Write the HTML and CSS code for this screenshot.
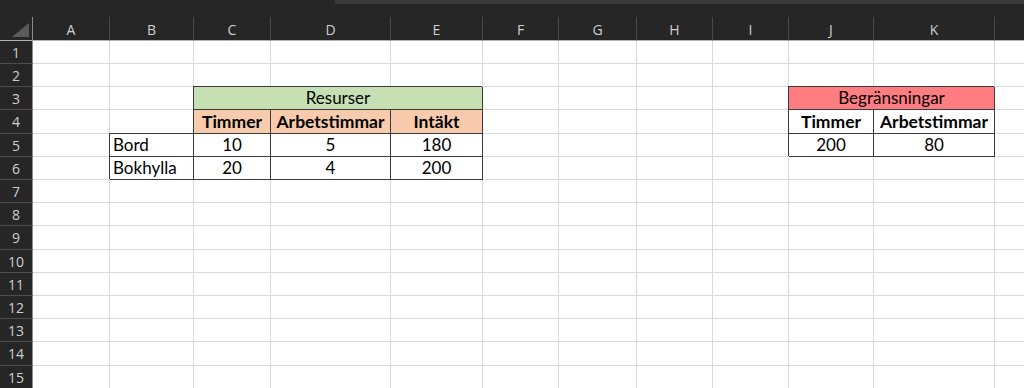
FILE: index.html
```html
<!DOCTYPE html>
<html lang="sv">
<head>
<meta charset="utf-8">
<title>Resurser</title>
<link rel="stylesheet" href="styles.css">
</head>
<body>
<div class="sheet">
  <div class="topbar"><div class="strip"></div></div>
  <div class="grid">
    <div class="corner"><svg width="17" height="14" viewBox="0 0 17 14"><polygon points="17,0 17,14 0,14" fill="#5a5a5a"/></svg></div>
    <div class="ch">A</div><div class="ch">B</div><div class="ch">C</div><div class="ch">D</div><div class="ch">E</div><div class="ch">F</div><div class="ch">G</div><div class="ch">H</div><div class="ch">I</div><div class="ch">J</div><div class="ch">K</div><div class="ch"></div>

    <div class="rh">1</div>
    <div class="c"></div><div class="c"></div><div class="c"></div><div class="c"></div><div class="c"></div><div class="c"></div><div class="c"></div><div class="c"></div><div class="c"></div><div class="c"></div><div class="c"></div><div class="c"></div>

    <div class="rh">2</div>
    <div class="c"></div><div class="c"></div><div class="c"></div><div class="c"></div><div class="c"></div><div class="c"></div><div class="c"></div><div class="c"></div><div class="c"></div><div class="c"></div><div class="c"></div><div class="c"></div>

    <div class="rh">3</div>
    <div class="c"></div><div class="c"></div>
    <div class="c b green center span3">Resurser</div>
    <div class="c"></div><div class="c"></div><div class="c"></div><div class="c"></div>
    <div class="c b red center span2">Begränsningar</div>
    <div class="c"></div>

    <div class="rh">4</div>
    <div class="c"></div><div class="c"></div>
    <div class="c b orange center bold">Timmer</div>
    <div class="c b orange center bold">Arbetstimmar</div>
    <div class="c b orange center bold">Intäkt</div>
    <div class="c"></div><div class="c"></div><div class="c"></div><div class="c"></div>
    <div class="c b center bold">Timmer</div>
    <div class="c b center bold">Arbetstimmar</div>
    <div class="c"></div>

    <div class="rh">5</div>
    <div class="c"></div>
    <div class="c b left">Bord</div>
    <div class="c b center">10</div>
    <div class="c b center">5</div>
    <div class="c b center">180</div>
    <div class="c"></div><div class="c"></div><div class="c"></div><div class="c"></div>
    <div class="c b center">200</div>
    <div class="c b center">80</div>
    <div class="c"></div>

    <div class="rh">6</div>
    <div class="c"></div>
    <div class="c b left">Bokhylla</div>
    <div class="c b center">20</div>
    <div class="c b center">4</div>
    <div class="c b center">200</div>
    <div class="c"></div><div class="c"></div><div class="c"></div><div class="c"></div><div class="c"></div><div class="c"></div><div class="c"></div>

    <div class="rh">7</div>
    <div class="c"></div><div class="c"></div><div class="c"></div><div class="c"></div><div class="c"></div><div class="c"></div><div class="c"></div><div class="c"></div><div class="c"></div><div class="c"></div><div class="c"></div><div class="c"></div>

    <div class="rh">8</div>
    <div class="c"></div><div class="c"></div><div class="c"></div><div class="c"></div><div class="c"></div><div class="c"></div><div class="c"></div><div class="c"></div><div class="c"></div><div class="c"></div><div class="c"></div><div class="c"></div>

    <div class="rh">9</div>
    <div class="c"></div><div class="c"></div><div class="c"></div><div class="c"></div><div class="c"></div><div class="c"></div><div class="c"></div><div class="c"></div><div class="c"></div><div class="c"></div><div class="c"></div><div class="c"></div>

    <div class="rh">10</div>
    <div class="c"></div><div class="c"></div><div class="c"></div><div class="c"></div><div class="c"></div><div class="c"></div><div class="c"></div><div class="c"></div><div class="c"></div><div class="c"></div><div class="c"></div><div class="c"></div>

    <div class="rh">11</div>
    <div class="c"></div><div class="c"></div><div class="c"></div><div class="c"></div><div class="c"></div><div class="c"></div><div class="c"></div><div class="c"></div><div class="c"></div><div class="c"></div><div class="c"></div><div class="c"></div>

    <div class="rh">12</div>
    <div class="c"></div><div class="c"></div><div class="c"></div><div class="c"></div><div class="c"></div><div class="c"></div><div class="c"></div><div class="c"></div><div class="c"></div><div class="c"></div><div class="c"></div><div class="c"></div>

    <div class="rh">13</div>
    <div class="c"></div><div class="c"></div><div class="c"></div><div class="c"></div><div class="c"></div><div class="c"></div><div class="c"></div><div class="c"></div><div class="c"></div><div class="c"></div><div class="c"></div><div class="c"></div>

    <div class="rh">14</div>
    <div class="c"></div><div class="c"></div><div class="c"></div><div class="c"></div><div class="c"></div><div class="c"></div><div class="c"></div><div class="c"></div><div class="c"></div><div class="c"></div><div class="c"></div><div class="c"></div>

    <div class="rh">15</div>
    <div class="c"></div><div class="c"></div><div class="c"></div><div class="c"></div><div class="c"></div><div class="c"></div><div class="c"></div><div class="c"></div><div class="c"></div><div class="c"></div><div class="c"></div><div class="c"></div>
  </div>
</div>
</body>
</html>
```

FILE: styles.css
```css
* { box-sizing: border-box; }
html, body { margin: 0; padding: 0; background: #ffffff; }
.sheet {
  width: 1024px;
  height: 388px;
  overflow: hidden;
  background: #ffffff;
}
.topbar {
  height: 17px;
  background: #262626;
  display: flex;
  justify-content: flex-end;
  align-items: flex-start;
}
.strip {
  width: 689px;
  height: 4px;
  background: #3a3a3a;
}
.grid {
  display: grid;
  width: 1055px;
  grid-template-columns: 33px 77px 84px 77px 120px 92px 76px 78px 76px 76px 85px 121px 60px;
  grid-template-rows: 24px 23px 23px 23px 24px 23px 23px 23px 23px 24px 23px 23px 23px 23px 24px 23px;
}
.corner {
  background: #262626;
  border-right: 1px solid #8c8c8c;
  border-bottom: 1px solid #b4b4b4;
  display: flex;
  align-items: flex-end;
  justify-content: flex-end;
  padding: 0 3px 3px 0;
}
.corner svg { display: block; }
.ch {
  background: #262626;
  color: #cfcfcf;
  font-family: "Open Sans", "Noto Sans", sans-serif;
  font-size: 14px;
  border-right: 1px solid #4a4a4a;
  border-bottom: 1px solid #b4b4b4;
  display: flex;
  align-items: center;
  justify-content: center;
  padding-top: 2px;
}
.rh {
  background: #262626;
  color: #cfcfcf;
  font-family: "Open Sans", "Noto Sans", sans-serif;
  font-size: 14px;
  border-right: 1px solid #8c8c8c;
  border-bottom: 1px solid #4f4f4f;
  display: flex;
  align-items: center;
  justify-content: center;
}
.c {
  background: #ffffff;
  border-right: 1px solid #d9d9d9;
  border-bottom: 1px solid #d9d9d9;
  font-family: "Lato", "Liberation Sans", sans-serif;
  font-size: 17px;
  line-height: 20px;
  color: #000000;
  display: flex;
  align-items: flex-end;
  padding-bottom: 1px;
  white-space: nowrap;
}
.b {
  border-right: 1px solid #3a3a3a;
  border-bottom: 1px solid #3a3a3a;
  box-shadow: -1px -1px 0 0 #3a3a3a;
}
.center { justify-content: center; }
.left { justify-content: flex-start; padding-left: 3px; }
.bold { font-weight: 700; font-size: 17.5px; }
.green { background: #c6e0b4; }
.orange { background: #f8cbad; }
.red { background: #ff7c80; }
.span3 { grid-column: span 3; }
.span2 { grid-column: span 2; }
```
